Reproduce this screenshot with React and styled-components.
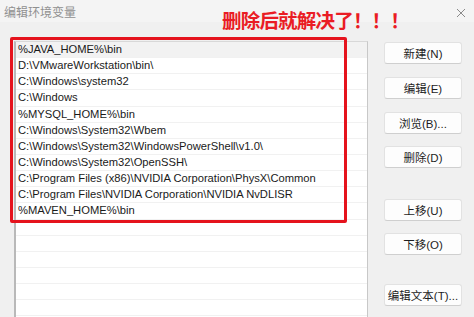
import React from 'react';
import styled, { createGlobalStyle } from 'styled-components';

const GlobalStyle = createGlobalStyle`
  html, body {
    margin: 0;
    padding: 0;
    background: #f0f0f0;
  }
  body {
    font-family: "Liberation Sans", "Noto Sans CJK SC", sans-serif;
  }
`;

const paths = [
  '%JAVA_HOME%\\bin',
  'D:\\VMwareWorkstation\\bin\\',
  'C:\\Windows\\system32',
  'C:\\Windows',
  '%MYSQL_HOME%\\bin',
  'C:\\Windows\\System32\\Wbem',
  'C:\\Windows\\System32\\WindowsPowerShell\\v1.0\\',
  'C:\\Windows\\System32\\OpenSSH\\',
  'C:\\Program Files (x86)\\NVIDIA Corporation\\PhysX\\Common',
  'C:\\Program Files\\NVIDIA Corporation\\NVIDIA NvDLISR',
  '%MAVEN_HOME%\\bin',
];

const buttons = [
  { label: '新建(N)', top: 0 },
  { label: '编辑(E)', top: 13 },
  { label: '浏览(B)...', top: 13 },
  { label: '删除(D)', top: 12 },
  { label: '上移(U)', top: 31 },
  { label: '下移(O)', top: 12 },
  { label: '编辑文本(T)...', top: 29 },
];

const EMPTY_ROWS = 7;

const App = () => {
  return (
    <>
      <GlobalStyle />
      <Dialog>
        <TitleBar>
          <Title>编辑环境变量</Title>
          <CloseIcon viewBox="0 0 10 10">
            <path d="M1 1 L9 9 M9 1 L1 9" stroke="#8a8a8a" strokeWidth="1" fill="none" />
          </CloseIcon>
          <Annotation>删除后就解决了！！！</Annotation>
        </TitleBar>
        <Body>
          <ListBox>
            {paths.map((p, i) => (
              <Row key={p} selected={i === 0}>{p}</Row>
            ))}
            {Array.from({ length: EMPTY_ROWS }).map((_, i) => (
              <Row key={'empty' + i} />
            ))}
            <RedFrame />
          </ListBox>
          <ButtonColumn>
            {buttons.map((b) => (
              <Button key={b.label} top={b.top}>{b.label}</Button>
            ))}
          </ButtonColumn>
        </Body>
      </Dialog>
    </>
  );
};

export default App;

const Dialog = styled.div`
  width: 474px;
  height: 317px;
  overflow: hidden;
  display: flex;
  flex-direction: column;
  background: #f0f0f0;
  position: relative;
`;

const TitleBar = styled.div`
  flex-shrink: 0;
  height: 41px;
  display: flex;
  align-items: flex-start;
  justify-content: space-between;
  padding: 4px 8px 0 4px;
  box-sizing: border-box;
  background: linear-gradient(#f4f4f4 0 22px, #f0f0f0 22px);
`;

const Title = styled.div`
  font-size: 12px;
  color: #909090;
  line-height: 16px;
  font-family: "Noto Sans CJK SC", sans-serif;
`;

const CloseIcon = styled.svg`
  width: 10px;
  height: 10px;
  margin-top: 4px;
`;

const Annotation = styled.div`
  position: absolute;
  left: 222px;
  top: 6px;
  font-family: "Noto Sans CJK SC", sans-serif;
  font-weight: 700;
  font-size: 19.5px;
  line-height: 28px;
  color: #ea1c24;
  letter-spacing: -0.8px;
`;

const Body = styled.div`
  flex: 1;
  min-height: 0;
  display: flex;
  align-items: flex-start;
  padding-left: 14px;
  gap: 16px;
`;

const ListBox = styled.div`
  position: relative;
  flex-shrink: 0;
  width: 351px;
  height: 290px;
  background: #ffffff;
  border-left: 2px solid #b9b9b9;
  border-top: 1px solid #d8d8d8;
  border-right: 1px solid #c8c8c8;
`;

const Row = styled.div`
  height: 16.15px;
  box-sizing: border-box;
  border-bottom: 1px solid #f1f1f1;
  padding-left: 2px;
  font-size: 11.2px;
  line-height: 15px;
  color: #1a1a1a;
  white-space: nowrap;
  background: ${(p) => (p.selected ? '#f2f2f2' : 'transparent')};
`;

const RedFrame = styled.div`
  position: absolute;
  left: -6px;
  top: -5px;
  width: 331px;
  height: 180px;
  border: 3px solid #e5131d;
  border-radius: 2px;
  pointer-events: none;
`;

const ButtonColumn = styled.div`
  display: flex;
  flex-direction: column;
  width: 78px;
  padding-top: 1px;
`;

const Button = styled.div`
  margin-top: ${(p) => p.top}px;
  height: 22px;
  box-sizing: border-box;
  display: flex;
  align-items: center;
  justify-content: center;
  background: #fdfdfd;
  border: 1px solid #e2e2e2;
  border-bottom-color: #cfcfcf;
  border-radius: 3px;
  font-family: "Liberation Sans", "Noto Sans CJK SC", sans-serif;
  font-size: 11.5px;
  color: #1e1e1e;
`;
